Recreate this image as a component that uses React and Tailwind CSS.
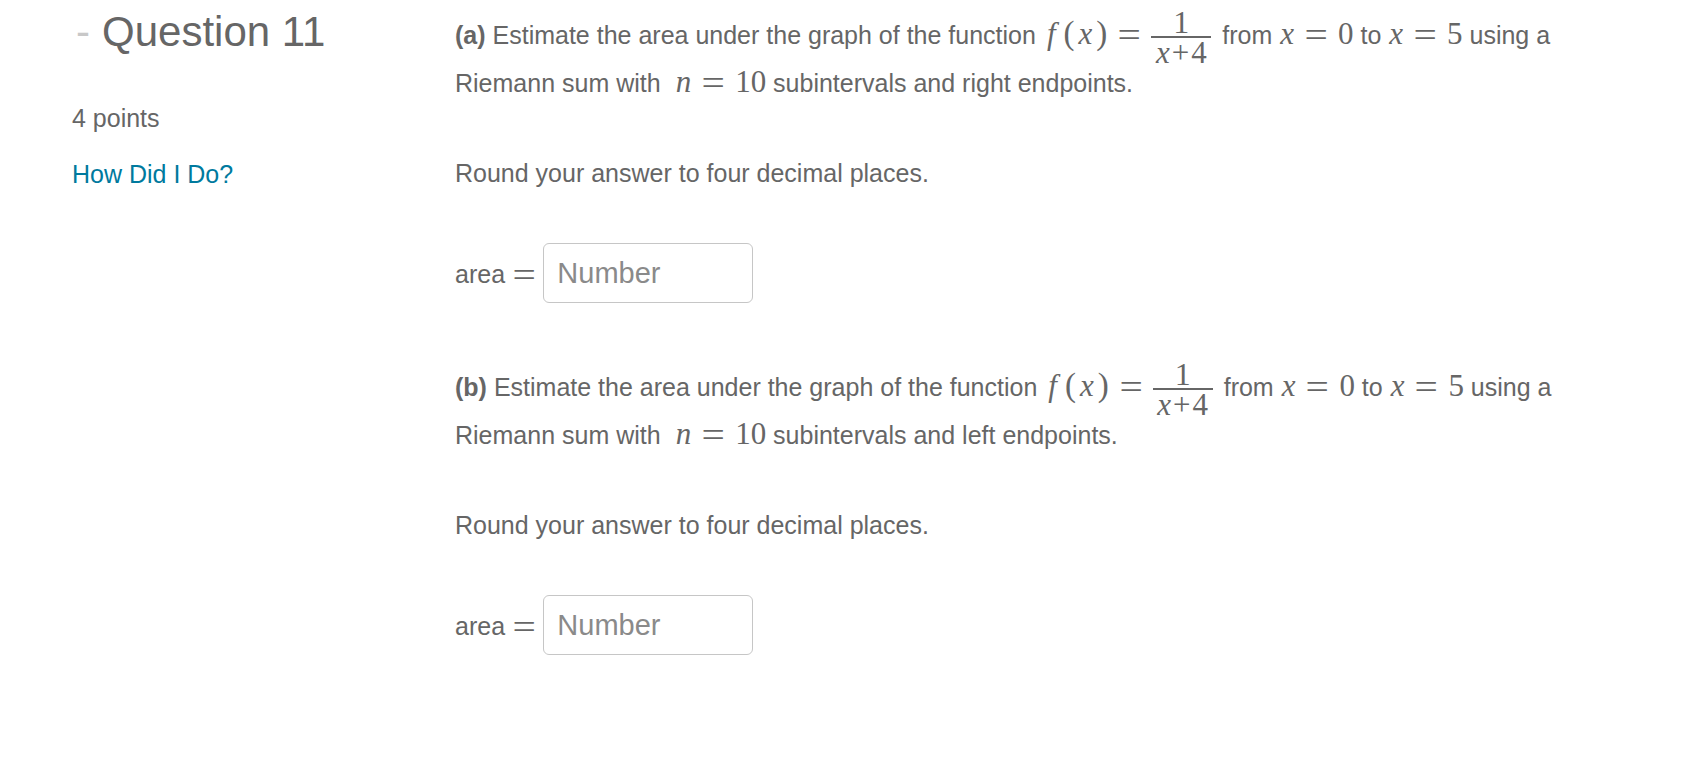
import React from "react";

const serif = "font-['Liberation_Serif','Times_New_Roman',serif]";

function V({ children, className = "" }) {
  return <i className={`${serif} text-[31px] leading-none ${className}`}>{children}</i>;
}

function N({ children, className = "" }) {
  return <span className={`${serif} text-[31px] leading-none ${className}`}>{children}</span>;
}

// equals sign with math spacing on both sides
function Eq() {
  return (
    <span className="inline-block w-[44px] text-center leading-none">
      <span className={`${serif} inline-block text-[36px] scale-x-[1.15] align-[-3px]`}>=</span>
    </span>
  );
}

function Frac() {
  return (
    <span className="inline-flex flex-col items-center align-[11px] mr-[11px]">
      <span className={`${serif} text-[32px] leading-[28px] block`}>1</span>
      <span className="block h-[2px] w-[60px] bg-[#666]"></span>
      <span className={`${serif} text-[31px] leading-[30px] block`}>
        <i>x</i>
        <span className="mx-[2px]">+</span>4
      </span>
    </span>
  );
}

function Part({ label, side, first }) {
  return (
    <div className={first ? "pt-[8px]" : "mt-[49px] pt-[8px]"}>
      <div className="h-[50px] leading-[50px] whitespace-nowrap">
        <b className="font-bold">({label})</b> Estimate the area under the graph of the function
        <span className="ml-[11px]">
          <V>f</V>
          <N className="ml-[8px] mr-[4px] text-[33px]">(</N>
          <V>x</V>
          <N className="ml-[4px] text-[33px]">)</N>
        </span>
        <Eq />
        <Frac />
        from <V className="ml-[1px]">x</V>
        <Eq />
        <N>0</N> to <V className="ml-[1px]">x</V>
        <Eq />
        <N>5</N> using a
      </div>
      <div className="h-[50px] leading-[50px] whitespace-nowrap">
        Riemann sum with
        <V className="ml-[15px]">n</V>
        <Eq />
        <N>10</N> subintervals and {side} endpoints.
      </div>
      <div className="mt-[40px] h-[50px] leading-[50px]">
        Round your answer to four decimal places.
      </div>
      <div className="mt-[45px] flex items-center h-[60px]">
        <span className="pt-[3px]">area</span>
        <span className="pt-[3px] ml-[9px] mr-[9px] leading-none">
          <span className={`${serif} inline-block text-[36px] scale-x-[1.15]`}>=</span>
        </span>
        <input
          type="text"
          placeholder="Number"
          className="w-[210px] h-[60px] border border-[#c6c6c6] rounded-[6px] bg-white pl-[13px] text-[29px] text-[#666] placeholder:text-[#8a8a8a] outline-none font-['Liberation_Sans',Arial,sans-serif]"
        />
      </div>
    </div>
  );
}

export default function App() {
  return (
    <div className="min-h-screen w-full bg-white text-[#666] font-['Liberation_Sans',Arial,sans-serif]">
      <div className="flex">
        {/* left column */}
        <div className="w-[455px] shrink-0 pl-[72px] pt-[8px]">
          <h2 className="ml-[4px] text-[42px] leading-[48px] font-normal whitespace-nowrap">
            <span className="text-[#c8c8c8]">-</span>
            <span className="ml-[12px]">Question 11</span>
          </h2>
          <p className="mt-[47px] text-[25px] leading-[30px]">4 points</p>
          <a href="#" className="block mt-[26px] text-[25px] leading-[30px] text-[#007a9e]">
            How Did I Do?
          </a>
        </div>

        {/* right column */}
        <div className="flex-1 text-[25px]">
          <Part label="a" side="right" first />
          <Part label="b" side="left" />
        </div>
      </div>
    </div>
  );
}
